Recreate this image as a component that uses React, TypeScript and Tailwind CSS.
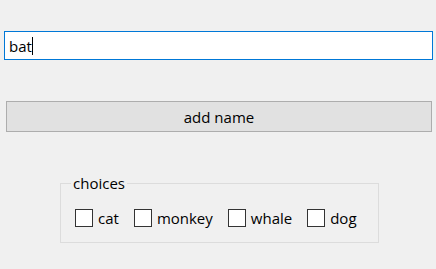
import React from "react";

const font = { fontFamily: '"Open Sans", "Noto Sans", sans-serif' };

function Check({ label }: { label: string }) {
  return (
    <div className="flex items-center mr-[15px]">
      <span className="w-[18px] h-[18px] border border-[#333333] bg-white box-border" />
      <span className="ml-[5px] text-[15px] leading-[20px] text-black">{label}</span>
    </div>
  );
}

export default function App() {
  return (
    <div
      className="w-[436px] h-[269px] bg-[#f0f0f0] pt-[31px] overflow-hidden"
      style={font}
    >
      <div className="ml-[4px] w-[429px] h-[29px] border border-[#0078d7] bg-white flex items-center pl-[4px] box-border">
        <span className="text-[15px] leading-[20px] text-black">bat</span>
        <span className="w-px h-[18px] bg-black" />
      </div>
      <div className="mt-[41px] ml-[6px] w-[426px] h-[31px] border border-[#adadad] bg-[#e1e1e1] flex items-center justify-center box-border">
        <span className="text-[15px] leading-[20px] text-black">add name</span>
      </div>
      <fieldset className="mt-[41px] ml-[60px] w-[319px] border border-[#dcdcdc] pb-[15px] box-border">
        <legend className="ml-[10px] px-[2px] text-[15px] leading-[20px] text-black">
          choices
        </legend>
        <div className="mt-[16px] pl-[14px] flex items-center h-[18px]">
          <Check label="cat" />
          <Check label="monkey" />
          <Check label="whale" />
          <Check label="dog" />
        </div>
      </fieldset>
    </div>
  );
}
